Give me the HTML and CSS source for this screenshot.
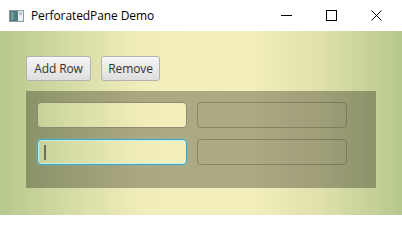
FILE: index.html
```html
<!DOCTYPE html>
<html>
<head>
<meta charset="utf-8">
<title>PerforatedPane Demo</title>
<link rel="stylesheet" href="styles.css">
</head>
<body>
<div class="window">
  <div class="titlebar">
    <svg class="app-icon" width="15" height="12" viewBox="0 0 15 12">
      <rect x="0.5" y="0.5" width="14" height="11" fill="#e9eef0" stroke="#8b9aa0"/>
      <rect x="1" y="1" width="8" height="10" fill="#4f7c80"/>
      <rect x="2" y="2" width="3" height="8" fill="#6f9a9c"/>
      <rect x="10" y="2" width="3" height="3" fill="#b9c6ca"/>
    </svg>
    <span class="title">PerforatedPane Demo</span>
    <div class="controls">
      <svg class="ctl" width="11" height="11" viewBox="0 0 11 11"><line x1="0" y1="5.5" x2="11" y2="5.5" stroke="#000" stroke-width="1"/></svg>
      <svg class="ctl" width="11" height="11" viewBox="0 0 11 11"><rect x="0.5" y="0.5" width="10" height="10" fill="none" stroke="#000" stroke-width="1"/></svg>
      <svg class="ctl" width="11" height="11" viewBox="0 0 11 11"><path d="M0.5 0.5 L10.5 10.5 M10.5 0.5 L0.5 10.5" stroke="#000" stroke-width="1" fill="none"/></svg>
    </div>
  </div>
  <div class="content">
    <div class="toolbar">
      <button class="btn btn-add">Add Row</button>
      <button class="btn btn-remove">Remove</button>
    </div>
    <div class="pane">
      <div class="field perforated"></div>
      <div class="field"></div>
      <div class="field perforated focused"><span class="caret"></span></div>
      <div class="field"></div>
    </div>
  </div>
</div>
</body>
</html>
```

FILE: styles.css
```css
html, body {
  margin: 0;
  padding: 0;
}
body {
  width: 402px;
  height: 215px;
  overflow: hidden;
  font-family: "Open Sans", "Noto Sans", "Liberation Sans", sans-serif;
}
.window {
  display: flex;
  flex-direction: column;
  width: 402px;
  height: 215px;
}
.titlebar {
  height: 31px;
  background: #ffffff;
  display: flex;
  align-items: center;
  flex-shrink: 0;
}
.app-icon {
  margin-left: 9px;
  margin-right: 7px;
  margin-top: 1px;
}
.title {
  font-size: 12px;
  color: #000;
  letter-spacing: -0.1px;
}
.controls {
  margin-left: auto;
  display: flex;
  align-items: center;
  gap: 34px;
  padding-right: 20px;
}
.ctl {
  display: block;
}
.content {
  flex: 1;
  background: linear-gradient(to right, #b6c88d 0%, #d6dca6 18%, #f2eebb 36%, #f3efbc 62%, #dfe0ac 80%, #b6c88d 100%) fixed;
  padding: 25px 26px 0 26px;
}
.toolbar {
  display: flex;
  gap: 10px;
  height: 25px;
}
.btn {
  height: 25px;
  padding: 0;
  text-align: center;
  font-family: "Open Sans", "Noto Sans", "Liberation Sans", sans-serif;
  font-size: 12px;
  letter-spacing: -0.1px;
  color: #333;
  border: 1px solid #b2b2b2;
  border-radius: 3px;
  background: linear-gradient(to bottom, #f6f6f6, #dedede);
  box-shadow: inset 0 1px 0 rgba(255,255,255,0.6);
}
.btn-add {
  width: 65px;
}
.btn-remove {
  width: 59px;
}
.pane {
  margin-top: 10px;
  width: 350px;
  height: 97px;
  box-sizing: border-box;
  background: rgba(10, 8, 0, 0.3);
  padding: 11px 0 0 11px;
  display: grid;
  grid-template-columns: 150px 150px;
  grid-template-rows: 26px 26px;
  column-gap: 10px;
  row-gap: 11px;
  align-content: start;
}
.field {
  box-sizing: border-box;
  border: 1px solid rgba(60, 55, 35, 0.3);
  border-radius: 4px;
  display: flex;
  align-items: center;
}
.perforated {
  background: linear-gradient(to right, #b6c88d 0%, #d6dca6 18%, #f2eebb 36%, #f3efbc 62%, #dfe0ac 80%, #b6c88d 100%) fixed;
  border-color: #8f8a6f;
}
.focused {
  border-color: #3da6bf;
  box-shadow: inset 0 0 0 1px rgba(205, 240, 235, 0.85), 0 0 0 1px rgba(110, 190, 190, 0.35);
}
.caret {
  display: block;
  width: 2px;
  height: 15px;
  margin-left: 6px;
  background: #6e6d55;
}
```
